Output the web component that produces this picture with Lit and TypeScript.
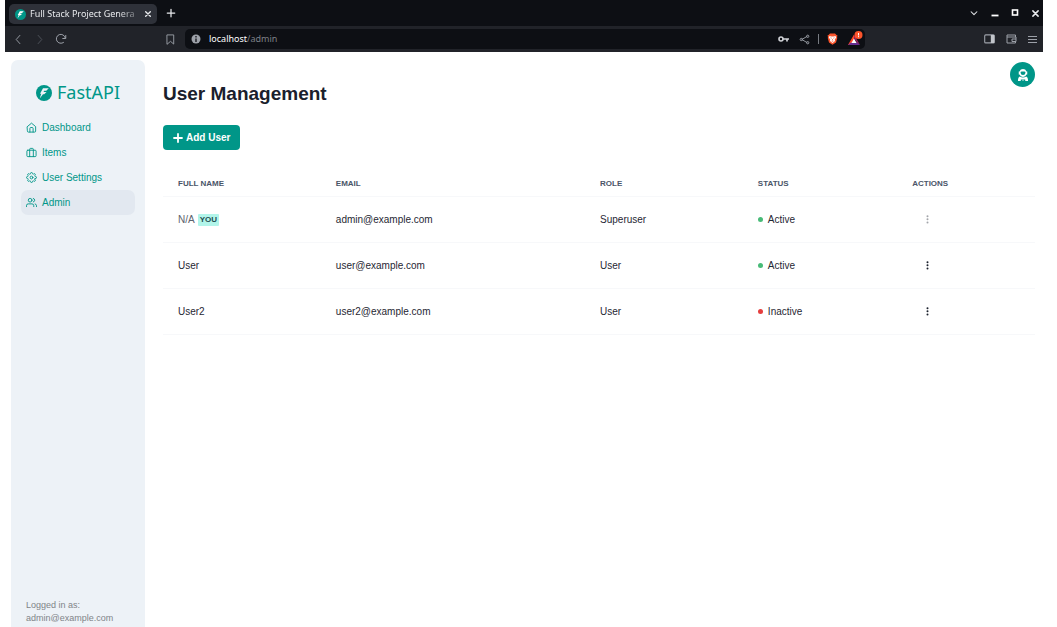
import { LitElement, html, css, svg, nothing } from "lit";
import { customElement, property } from "lit/decorators.js";

interface User {
  name: string;
  email: string;
  role: string;
  active: boolean;
  you?: boolean;
}

const users: User[] = [
  { name: "N/A", email: "admin@example.com", role: "Superuser", active: true, you: true },
  { name: "User", email: "user@example.com", role: "User", active: true },
  { name: "User2", email: "user2@example.com", role: "User", active: false },
];

const stroke = (size: number, body: unknown, width = 2) => html`
  <svg width=${size} height=${size} viewBox="0 0 24 24" fill="none" stroke="currentColor"
    stroke-width=${width} stroke-linecap="round" stroke-linejoin="round" aria-hidden="true">${body}</svg>`;

const paths = {
  home: svg`<path d="M3 10 12 2.500l9 7.500v10a2 2 0 0 1-2 2H5a2 2 0 0 1-2-2z"/><path d="M8.500 22v-8a2 2 0 0 1 2-2h3a2 2 0 0 1 2 2v8"/>`,
  briefcase: svg`<rect x="2" y="7" width="20" height="14" rx="2"/><path d="M16 21V5a2 2 0 0 0-2-2h-4a2 2 0 0 0-2 2v16"/>`,
  settings: svg`<circle cx="12" cy="12" r="3"/><path d="M19.400 15a1.650 1.650 0 0 0 .33 1.820l.06.06a2 2 0 1 1-2.830 2.830l-.06-.06a1.650 1.650 0 0 0-2.800 1.180V21a2 2 0 0 1-4 0v-.09A1.650 1.650 0 0 0 7.200 19.700l-.06.06a2 2 0 1 1-2.830-2.830l.06-.06A1.650 1.650 0 0 0 3.100 14H3a2 2 0 0 1 0-4h.09A1.650 1.650 0 0 0 4.300 7.200l-.06-.06a2 2 0 1 1 2.830-2.830l.06.06A1.650 1.650 0 0 0 10 3.100V3a2 2 0 0 1 4 0v.09a1.650 1.650 0 0 0 2.820 1.220l.06-.06a2 2 0 1 1 2.830 2.830l-.06.06A1.650 1.650 0 0 0 20.900 10H21a2 2 0 0 1 0 4h-.09a1.650 1.650 0 0 0-1.510 1z"/>`,
  users: svg`<path d="M17 21v-2a4 4 0 0 0-4-4H5a4 4 0 0 0-4 4v2"/><circle cx="9" cy="7" r="4"/><path d="M23 21v-2a4 4 0 0 0-3-3.870M16 3.130a4 4 0 0 1 0 7.750"/>`,
};

const bolt = (size: number, ink: string) => html`
  <svg width=${size} height=${size} viewBox="0 0 32 32" aria-hidden="true">
    <circle cx="16" cy="16" r="16" fill="#009688"/>
    <path d="M14 6.500h11.500l-5 5h-4l-1.500 2.500h6L16.500 18.500H14L7.500 27l3-9.500H8z" fill=${ink}/>
  </svg>`;

@customElement("browser-bar")
class BrowserBar extends LitElement {
  static styles = css`
    :host { display: block; font-family: "Noto Sans", sans-serif; font-size: 9px; color: #e8eaed; }
    button { all: unset; display: flex; align-items: center; justify-content: center; color: inherit; }
    svg { display: block; flex: none; }
    .tabs { height: 26px; box-sizing: border-box; background: #0d0f14; display: flex; align-items: center; padding: 0 3px 0 4px; gap: 9px; }
    .tab { height: 20px; width: 148px; box-sizing: border-box; border-radius: 5px; background: #2e3139; display: flex; align-items: center; gap: 4px; padding: 0 5px 0 6px; margin-top: 2px; }
    .tab-title { flex: 1; white-space: nowrap; line-height: 14px; -webkit-mask-image: linear-gradient(90deg, #000 80%, transparent 105%); mask-image: linear-gradient(90deg, #000 80%, transparent 105%); }
    .spacer { flex: 1; }
    .window { display: flex; align-items: center; gap: 10px; }
    .tools { height: 26px; background: #212329; display: flex; align-items: center; padding: 0 6px 0 8px; color: #9da1a9; }
    .nav { display: flex; align-items: center; gap: 10px; width: 152px; }
    .dim { color: #50545c; }
    .address { flex: 1; height: 20px; background: #0d0f14; border-radius: 5px; display: flex; align-items: center; padding: 0 2px 0 6px; gap: 8px; margin: 0 119px 0 9px; }
    .url { flex: 1; color: #7d8087; line-height: 14px; }
    .host { color: #fff; }
    .extras { display: flex; align-items: center; gap: 10px; }
    .rule { width: 1px; height: 10px; background: #777b82; }
    .shields { display: flex; align-items: center; gap: 10px; }
    .right { display: flex; align-items: center; gap: 11px; }
  `;
  render() {
    return html`
      <div class="tabs">
        <div class="tab">
          ${bolt(11, "#fff")}
          <span class="tab-title">Full Stack Project Genera</span>
          <button aria-label="Close tab">${stroke(8, svg`<path d="M5 5l14 14M19 5 5 19"/>`, 4)}</button>
        </div>
        <button aria-label="New tab">${stroke(10, svg`<path d="M12 3v18M3 12h18"/>`, 3)}</button>
        <span class="spacer"></span>
        <div class="window">
          <button aria-label="Search tabs">${stroke(10, svg`<path d="M5 9l7 7 7-7"/>`, 2.5)}</button>
          <button aria-label="Minimize">
            <svg width="12" height="10" viewBox="0 0 12 10"><path d="M2.500 7.500h7" stroke="#fff" stroke-width="1.800"/></svg>
          </button>
          <button aria-label="Maximize">
            <svg width="10" height="10" viewBox="0 0 10 10"><rect x="1.500" y="2" width="5" height="5" fill="none" stroke="#fff" stroke-width="1.600"/></svg>
          </button>
          <button aria-label="Close">${stroke(9, svg`<path d="M5 5l14 14M19 5 5 19"/>`, 4)}</button>
        </div>
      </div>
      <div class="tools">
        <div class="nav">
          <button aria-label="Back">${stroke(11, svg`<path d="M15 3l-8 9 8 9"/>`)}</button>
          <button class="dim" aria-label="Forward">${stroke(11, svg`<path d="M9 3l8 9-8 9"/>`)}</button>
          <button aria-label="Reload">${stroke(12, svg`<path d="M17 19a9 9 0 1 1 3.500-9.500M21.500 5v6h-6"/>`)}</button>
        </div>
        <button aria-label="Bookmark">${stroke(11, svg`<path d="M5 2h14v20l-7-6-7 6z"/>`)}</button>
        <div class="address">
          <svg width="10" height="10" viewBox="0 0 10 10" aria-hidden="true"><circle cx="5" cy="5" r="4.500" fill="#9da1a9"/><path d="M5 2v1.500M5 4.500V8" stroke="#0d0f14" stroke-width="1.300"/></svg>
          <span class="url"><span class="host">localhost</span>/admin</span>
          <div class="extras">
            <svg width="11" height="8" viewBox="0 0 11 8" aria-hidden="true"><circle cx="3" cy="4" r="2" fill="none" stroke="#d0d2d6" stroke-width="1.600"/><path d="M5 4h6M9 4v2.500" stroke="#d0d2d6" stroke-width="1.700" fill="none"/></svg>
            <svg width="11" height="11" viewBox="0 0 24 24" fill="none" stroke="#9da1a9" stroke-width="2" aria-hidden="true"><path d="M6 12l12-7M6 12l12 7"/><circle cx="5" cy="12" r="2.500"/><circle cx="19" cy="5" r="2.500"/><circle cx="19" cy="19" r="2.500"/></svg>
          </div>
          <span class="rule"></span>
          <div class="shields">
            <svg width="11" height="12" viewBox="0 0 22 24" aria-hidden="true"><path d="M6 1h10l3 3 2 1-1 3 .500 2-2.500 9-7 4.500L4 19 1.500 10 2 8 1 5l2-1z" fill="#fb542b"/><path d="M5 6l4 1h4l4-1 1.500 3-3 4 .500 3-5 4-5-4 .500-3-3-4z" fill="#fff"/><path d="M7 9.500l2.500 1M15 9.500l-2.500 1M11 12v3M9 16l2 1 2-1" stroke="#fb542b" stroke-width="1.400" fill="none"/></svg>
            <svg width="15" height="18" viewBox="0 0 15 18" aria-hidden="true"><path d="M0 15 6 4.500V9.500L3 15z" fill="#ff4724"/><path d="M6 4.500 12 15 9 12.500 6 8z" fill="#9e1f63"/><path d="M0 15l3-2.500h6l3 2.500z" fill="#662d91"/><path d="M6 8.500 8.600 13H3.400z" fill="#fff"/><circle cx="10.500" cy="5" r="4" fill="#fb542b"/><path d="M10.500 3v2.500M10.500 6.200v1" stroke="#fff" stroke-width="1"/></svg>
          </div>
        </div>
        <div class="right">
          <button aria-label="Sidebar"><svg width="11" height="10" viewBox="0 0 11 10"><rect x=".7" y=".9" width="9.600" height="8" rx="1" fill="none" stroke="currentColor" stroke-width="1.100"/><path d="M6.800 1h3.500v8H6.800z" fill="#c2c5cb"/></svg></button>
          <button aria-label="Wallet"><svg width="11" height="10" viewBox="0 0 11 10" fill="none" stroke="currentColor"><path d="M9.500 3V1H1v8h8.500V7.500M1 3h9v4.500H6V5h4"/></svg></button>
          <button aria-label="Menu"><svg width="9" height="9" viewBox="0 0 9 9"><path d="M0 1.500h9M0 4.500h9M0 7.500h9" stroke="currentColor"/></svg></button>
        </div>
      </div>`;
  }
}

@customElement("side-nav")
class SideNav extends LitElement {
  static styles = css`
    :host { display: flex; flex-direction: column; box-sizing: border-box; width: 134px; padding: 20px 10px 2px; background: #edf2f7; border-radius: 7px 7px 0 0; color: #009688; }
    .logo { display: flex; align-items: center; justify-content: center; gap: 5px; height: 25px; font: 18px/25px "Noto Sans", sans-serif; color: #009688; text-decoration: none; margin-bottom: 10px; }
    svg { display: block; flex: none; }
    nav { display: flex; flex-direction: column; }
    .item { display: flex; align-items: center; gap: 5px; height: 25px; padding: 0 5px; border-radius: 7px; color: inherit; text-decoration: none; line-height: 15px; }
    .item.active { background: #e2e8f0; }
    .account { margin-top: auto; padding: 0 5px; color: #808488; font-size: 9px; line-height: 13px; }
  `;
  render() {
    const items: [string, unknown, boolean][] = [
      ["Dashboard", paths.home, false],
      ["Items", paths.briefcase, false],
      ["User Settings", paths.settings, false],
      ["Admin", paths.users, true],
    ];
    return html`
      <a class="logo" href="#">${bolt(16, "#edf2f7")}<span>FastAPI</span></a>
      <nav aria-label="Main">
        ${items.map(([label, icon, active]) => html`
          <a class="item ${active ? "active" : ""}" href="#" aria-current=${active ? "page" : nothing}>
            ${stroke(11, icon)}<span>${label}</span>
          </a>`)}
      </nav>
      <div class="account">Logged in as:<br />admin@example.com</div>`;
  }
}

@customElement("user-table")
class UserTable extends LitElement {
  @property({ attribute: false }) users: User[] = [];
  static styles = css`
    :host { display: block; }
    table { width: 100%; border-collapse: collapse; table-layout: fixed; }
    th, td { text-align: left; padding: 0 15px; border-bottom: 1px solid #f7f8fa; box-sizing: border-box; white-space: nowrap; }
    th { height: 26px; padding-top: 2px; font-size: 8px; line-height: 12px; font-weight: 700; color: #4a5568; text-transform: uppercase; }
    td { height: 46px; line-height: 15px; color: #1f2733; }
    .name, .role { width: 18.1%; }
    .email { width: 30.3%; }
    .status { width: 17.7%; }
    .muted { color: #5c626c; }
    .badge { display: inline-block; vertical-align: middle; margin-left: 3px; padding: 0 2px; background: #b2f5ea; color: #234e52; font-size: 8px; line-height: 12px; font-weight: 700; border-radius: 1px; }
    .state { display: flex; align-items: center; gap: 5px; }
    .dot { width: 5px; height: 5px; border-radius: 50%; background: #48bb78; }
    .dot.off { background: #e53e3e; }
    button { all: unset; display: flex; align-items: center; justify-content: center; width: 30px; height: 25px; color: #1a202c; }
    button:disabled { opacity: 0.4; }
  `;
  render() {
    return html`
      <table>
        <thead>
          <tr><th class="name">Full name</th><th class="email">Email</th><th class="role">Role</th><th class="status">Status</th><th>Actions</th></tr>
        </thead>
        <tbody>
          ${this.users.map((u) => html`
            <tr>
              <td class=${u.you ? "muted" : ""}>${u.name}${u.you ? html`<span class="badge">YOU</span>` : nothing}</td>
              <td>${u.email}</td>
              <td>${u.role}</td>
              <td><div class="state"><span class="dot ${u.active ? "" : "off"}"></span>${u.active ? "Active" : "Inactive"}</div></td>
              <td>
                <button aria-label="Actions for ${u.email}" ?disabled=${u.you}>
                  <svg width="3" height="9" viewBox="0 0 3 9" fill="currentColor" aria-hidden="true"><circle cx="1.500" cy="1.200" r="1"/><circle cx="1.500" cy="4.300" r="1"/><circle cx="1.500" cy="7.400" r="1"/></svg>
                </button>
              </td>
            </tr>`)}
        </tbody>
      </table>`;
  }
}

@customElement("app-root")
class AppRoot extends LitElement {
  static styles = css`
    :host { display: flex; flex-direction: column; min-height: 100vh; box-sizing: border-box; padding: 0 14px 0 5px; background: #fff; font: 10px/15px "Liberation Sans", Arial, sans-serif; color: #1a202c; }
    .page { flex: 1; display: flex; position: relative; padding: 8px 8px 0 6px; }
    main { flex: 1; min-width: 0; padding: 21px 0 0 18px; }
    h1 { margin: 0; font-size: 19px; line-height: 26px; font-weight: 700; }
    .add { display: flex; align-items: center; gap: 3px; height: 25px; margin: 18px 0 20px; padding: 0 10px; border: 0; border-radius: 4px; background: #009688; color: #fff; font: 700 10px/15px "Liberation Sans", Arial, sans-serif; }
    .avatar { position: absolute; top: 10px; right: 8px; width: 25px; height: 25px; padding: 0; border: 0; border-radius: 50%; background: #009688; display: flex; align-items: center; justify-content: center; }
  `;
  render() {
    return html`
      <browser-bar></browser-bar>
      <div class="page">
        <side-nav></side-nav>
        <main>
          <h1>User Management</h1>
          <button class="add">
            <svg width="10" height="10" viewBox="0 0 10 10" aria-hidden="true"><path d="M5 1v8M1 5h8" stroke="#fff" stroke-width="1.800" stroke-linecap="round"/></svg>
            Add User
          </button>
          <user-table .users=${users}></user-table>
        </main>
        <button class="avatar" aria-label="User menu">
          <svg width="12" height="12" viewBox="0 0 24 24" aria-hidden="true">
            <path d="M5 5A7.500 7.500 0 0 1 19 5h1.500v6H19A7.500 7.500 0 0 1 5 11H3.500V5zM9.500 5A2.500 2.500 0 0 0 7 7.500a5 5 0 0 0 5 4.500 5 5 0 0 0 5-4.500A2.500 2.500 0 0 0 14.500 5z" fill="#fff" fill-rule="evenodd"/>
            <path d="M5.500 15q6.500 4 13 0 3.500 2 3.500 6.500V24h-5.500v-3h-9v3H2v-2.500Q2 17 5.500 15z" fill="#fff"/>
            <circle cx="12" cy="22.500" r="1.200" fill="#fff"/>
          </svg>
        </button>
      </div>`;
  }
}
